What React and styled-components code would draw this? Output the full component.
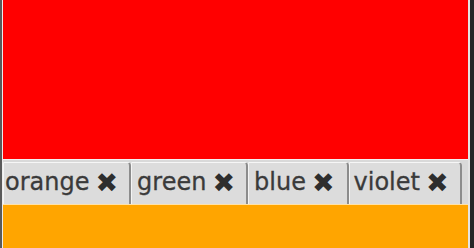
import styled, { createGlobalStyle } from 'styled-components';

const GlobalStyle = createGlobalStyle`
  html, body {
    margin: 0;
    padding: 0;
    width: 100%;
    height: 100%;
    overflow: hidden;
    background: #2a2a2a;
  }
  #root {
    height: 100%;
  }
`;

const Window = styled.div`
  height: 248px;
  width: 474px;
  box-sizing: border-box;
  display: flex;
  border-left: 2px solid #5a5a5a;
  border-right: 4px solid #262626;
  background: #d9d9d9;
`;

const Pane = styled.div`
  flex: 1;
  display: flex;
  flex-direction: column;
  border-left: 1px solid #ececec;
  border-right: 2px solid #e4e4e4;
`;

const ColorPanel = styled.div`
  background: ${p => p.$color};
  height: ${p => p.$height ? `${p.$height}px` : 'auto'};
  flex: ${p => p.$height ? '0 0 auto' : '1'};
  box-shadow: ${p => p.$glow ? `inset 0 1px 0 ${p.$glow}` : 'none'};
`;

const TabBar = styled.div`
  height: 45px;
  display: flex;
  align-items: flex-end;
  background: #d9d9d9;
  border-top: 1px solid #f2f2f2;
  box-sizing: border-box;
`;

const Tab = styled.div`
  height: 42px;
  box-sizing: border-box;
  display: flex;
  align-items: center;
  gap: 6px;
  padding: 0 ${p => p.$padRight}px 3px ${p => p.$padLeft}px;
  background: #dcdcdc;
  border-top: 1px solid #f6f6f6;
  border-left: 1px solid #f4f4f4;
  border-right: 2px solid #8c8c8c;
  border-top-right-radius: 4px;
  font-family: "DejaVu Sans", sans-serif;
  font-size: 24px;
  color: #3a3a3a;
  -webkit-text-stroke: 0.3px #3a3a3a;
`;

const Close = styled.span`
  font-family: "DejaVu Sans", sans-serif;
  font-size: 27px;
  color: #2e2e2e;
  line-height: 1;
  -webkit-text-stroke: 0;
`;

const tabs = [
  { name: 'orange', left: 1, right: 11 },
  { name: 'green', left: 5, right: 11 },
  { name: 'blue', left: 5, right: 12 },
  { name: 'violet', left: 4, right: 11 },
];

const App = () => (
  <>
    <GlobalStyle />
    <Window>
      <Pane>
        <ColorPanel $color="#ff0000" $height={159} />
        <TabBar>
          {tabs.map(t => (
            <Tab key={t.name} $padLeft={t.left} $padRight={t.right}>
              <span>{t.name}</span>
              <Close>✖</Close>
            </Tab>
          ))}
        </TabBar>
        <ColorPanel $color="#ffa500" $glow="#ffe2a8" />
      </Pane>
    </Window>
  </>
);

export default App;
